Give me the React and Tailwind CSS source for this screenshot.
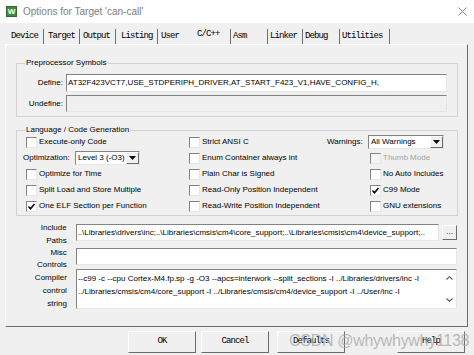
// App.jsx - Keil "Options for Target" dialog, C/C++ tab
const sunken = 'border border-t-[#838383] border-l-[#838383] border-b-[#e6e6e6] border-r-[#e6e6e6]';
const raised = 'border border-t-white border-l-white border-b-[#6b6b6b] border-r-[#6b6b6b]';

const Check = ({ checked, disabled }) => (
  <span className={`flex h-[11px] w-[11px] shrink-0 items-center justify-center ${sunken} ${disabled ? 'bg-[#f4f4f4]' : 'bg-white'}`}>
    {checked && (
      <svg width="9" height="9" viewBox="0 0 9 9">
        <path d="M1.5 4.5 L3.5 6.8 L7.5 2" stroke="#000" strokeWidth="1.5" fill="none" />
      </svg>
    )}
  </span>
);

const CheckRow = ({ label, checked, disabled }) => (
  <div className="flex h-[16px] items-center gap-[2px]">
    <Check checked={checked} disabled={disabled} />
    <span className={disabled ? 'text-[#a3a3a3]' : 'text-black'}>{label}</span>
  </div>
);

const Select = ({ value, className }) => (
  <div className={`flex h-[14px] items-center bg-white ${sunken} ${className}`}>
    <span className="flex-1 truncate pl-[2px]">{value}</span>
    <span className={`flex h-[12px] w-[13px] items-center justify-center bg-[#f0f0f0] ${raised}`}>
      <svg width="7" height="4" viewBox="0 0 7 4">
        <path d="M0 0 H7 L3.5 4 Z" fill="#000" />
      </svg>
    </span>
  </div>
);

const Group = ({ title, className, children }) => (
  <div className={`relative border border-[#d3d3d3] ${className}`}>
    <span className="absolute left-[8px] top-[-6px] bg-[#f0f0f0] px-[1px] leading-[10px]">{title}</span>
    {children}
  </div>
);

const tabs = [
  { name: 'Device', w: 'w-[39px]', pl: 'pl-[6px]' },
  { name: 'Target', w: 'w-[36px]', pl: 'pl-[4px]' },
  { name: 'Output', w: 'w-[36px]', pl: 'pl-[3px]' },
  { name: 'Listing', w: 'w-[42px]', pl: 'pl-[5px]' },
  { name: 'User', w: 'w-[30px]', pl: 'pl-[3px]', noLine: true },
  { name: 'C/C++', w: 'w-[43px]', pl: 'pl-[9px]', active: true },
  { name: 'Asm', w: 'w-[37px]', pl: 'pl-[2px]' },
  { name: 'Linker', w: 'w-[35px]', pl: 'pl-[2px]' },
  { name: 'Debug', w: 'w-[37px]', pl: 'pl-[2px]' },
  { name: 'Utilities', w: 'w-[50px]', pl: 'pl-[2px]' },
];

const DlgButton = ({ label, className }) => (
  <div className={`flex h-[22px] w-[68px] items-center justify-center bg-[#f0f0f0] font-['Liberation_Mono',monospace] text-[9px] tracking-[-0.9px] ${raised} ${className}`}>
    {label}
  </div>
);

export default function App() {
  return (
    <div className="relative h-[355px] w-[474px] overflow-hidden bg-[#f0f0f0] font-['Liberation_Sans',Arial,sans-serif] text-[8px] text-black">
      {/* title bar */}
      <div className="flex h-[23px] items-center bg-white pl-[6px] pr-[7px]">
        <span className="flex h-[11px] w-[11px] items-center justify-center border border-[#2f6b2f] bg-[#3c8f3c] text-[8px] font-bold leading-none text-white">
          W
        </span>
        <span className="ml-[6px] text-[10px] text-[#7d7d7d]">Options for Target 'can-call'</span>
        <svg className="ml-auto" width="9" height="9" viewBox="0 0 9 9">
          <path d="M0.5 0.5 L8.5 8.5 M8.5 0.5 L0.5 8.5" stroke="#8a8a8a" strokeWidth="1" />
        </svg>
      </div>

      {/* tab strip */}
      <div className="mt-[6px] flex h-[15px] pl-[5px] font-['Liberation_Mono',monospace] text-[9px] tracking-[-0.9px]">
        {tabs.map((t) => (
          <div
            key={t.name}
            className={`flex items-center ${t.w} ${t.pl} ${t.noLine ? '' : 'border-r border-[#6f6f6f]'} ${t.active ? 'pb-[4px]' : 'pt-[1px]'}`}
          >
            {t.name}
          </div>
        ))}
      </div>

      {/* tab panel */}
      <div className="ml-[5px] h-[283px] w-[463px] border border-t-white border-l-white border-b-[#6b6b6b] border-r-[#6b6b6b] px-[10px]">
        <Group title="Preprocessor Symbols" className="mt-[18px] h-[54px] w-[442px] pt-[10px]">
          <div className="flex h-[18px] items-center">
            <span className="w-[46px] text-right">Define:</span>
            <div className={`ml-[3px] flex h-[18px] w-[381px] items-center bg-white pl-[1px] ${sunken}`}>
              AT32F423VCT7,USE_STDPERIPH_DRIVER,AT_START_F423_V1,HAVE_CONFIG_H,
            </div>
          </div>
          <div className="mt-[3px] flex h-[17px] items-center">
            <span className="w-[46px] text-right">Undefine:</span>
            <div className={`ml-[3px] h-[17px] w-[381px] bg-[#f0f0f0] ${sunken}`} />
          </div>
        </Group>

        <Group title="Language / Code Generation" className="mt-[13px] flex h-[86px] w-[442px] pl-[6px] pt-[3px]">
          <div className="w-[166px]">
            <div className="ml-[3px]">
              <CheckRow label="Execute-only Code" />
            </div>
            <div className="flex h-[16px] items-center">
              <span className="w-[52px]">Optimization:</span>
              <Select value="Level 3 (-O3)" className="w-[65px]" />
            </div>
            <div className="ml-[3px]">
              <CheckRow label="Optimize for Time" />
              <CheckRow label="Split Load and Store Multiple" />
              <CheckRow label="One ELF Section per Function" checked />
            </div>
          </div>
          <div className="w-[138px]">
            <CheckRow label="Strict ANSI C" />
            <CheckRow label="Enum Container always int" />
            <CheckRow label="Plain Char is Signed" />
            <CheckRow label="Read-Only Position Independent" />
            <CheckRow label="Read-Write Position Independent" />
          </div>
          <div>
            <div className="flex h-[16px] items-center">
              <span className="w-[41px]">Warnings:</span>
              <Select value="All Warnings" className="w-[76px]" />
            </div>
            <div className="ml-[43px]">
              <CheckRow label="Thumb Mode" disabled />
              <CheckRow label="No Auto Includes" />
              <CheckRow label="C99 Mode" checked />
              <CheckRow label="GNU extensions" />
            </div>
          </div>
        </Group>

        {/* include paths */}
        <div className="mt-[6px] flex h-[25px] items-start">
          <div className="w-[51px] text-right leading-[12.5px]">
            <div>Include</div>
            <div>Paths</div>
          </div>
          <div className={`ml-[9px] mt-[2px] flex h-[17px] w-[366px] items-center overflow-hidden whitespace-nowrap bg-white pl-[1px] ${sunken}`}>
            ..\Libraries\drivers\inc;..\Libraries\cmsis\cm4\core_support;..\Libraries\cmsis\cm4\device_support;..
          </div>
          <div className={`ml-[3px] mt-[3px] flex h-[15px] w-[15px] items-end justify-center bg-[#f0f0f0] pb-[3px] leading-none ${raised}`}>
            ...
          </div>
        </div>

        {/* misc controls */}
        <div className="flex h-[22px] items-start">
          <div className="w-[51px] text-right leading-[12px]">
            <div>Misc</div>
            <div>Controls</div>
          </div>
          <div className={`ml-[9px] mt-[1px] h-[17px] w-[382px] bg-white ${sunken}`} />
        </div>

        {/* compiler control string */}
        <div className="flex items-start">
          <div className="w-[51px] pt-[2px] text-right leading-[13px]">
            <div>Compiler</div>
            <div>control</div>
            <div>string</div>
          </div>
          <div className={`ml-[9px] flex h-[40px] w-[382px] bg-white ${sunken}`}>
            <div className="flex-1 whitespace-nowrap pl-[1px] pt-[2px] leading-[13px]">
              <div>--c99 -c --cpu Cortex-M4.fp.sp -g -O3 --apcs=interwork --split_sections -I ../Libraries/drivers/inc -I</div>
              <div>../Libraries/cmsis/cm4/core_support -I ../Libraries/cmsis/cm4/device_support -I ../User/inc -I</div>
            </div>
            <div className="flex w-[14px] flex-col items-center justify-between py-[6px]">
              <svg width="7" height="4" viewBox="0 0 7 4">
                <path d="M0.5 3.5 L3.5 0.7 L6.5 3.5" stroke="#555" strokeWidth="1.1" fill="none" />
              </svg>
              <svg width="7" height="4" viewBox="0 0 7 4">
                <path d="M0.5 0.5 L3.5 3.3 L6.5 0.5" stroke="#555" strokeWidth="1.1" fill="none" />
              </svg>
            </div>
          </div>
        </div>
      </div>

      {/* dialog buttons */}
      <div className="mt-[4px] flex pl-[128px]">
        <DlgButton label="OK" />
        <DlgButton label="Cancel" className="ml-[5px]" />
        <DlgButton label="Defaults" className="ml-[8px]" />
        <DlgButton label="Help" className="ml-[52px]" />
      </div>

      {/* watermark */}
      <span className="absolute left-[289px] top-[333px] text-[16px] leading-none tracking-[-0.3px] text-[#a8a8a8]/80">
        CSDN @whywhywhy1138
      </span>
    </div>
  );
}
